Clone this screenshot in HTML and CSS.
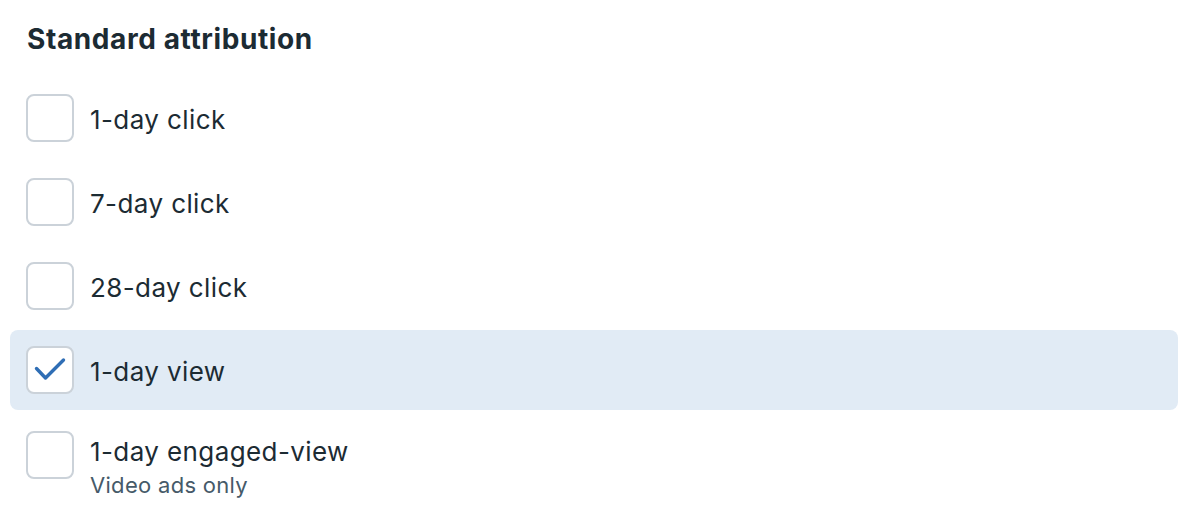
FILE: index.html
```html
<!DOCTYPE html>
<html>
<head>
<meta charset="utf-8">
<link rel="stylesheet" href="styles.css">
</head>
<body>
<div class="panel">
  <h2 class="title">Standard attribution</h2>
  <div class="list">
    <label class="row">
      <span class="box"></span>
      <span class="text"><span class="label">1-day click</span></span>
    </label>
    <label class="row">
      <span class="box"></span>
      <span class="text"><span class="label">7-day click</span></span>
    </label>
    <label class="row">
      <span class="box"></span>
      <span class="text"><span class="label">28-day click</span></span>
    </label>
    <label class="row selected">
      <span class="box">
        <svg class="check" width="48" height="48" viewBox="0 0 48 48"><path d="M10.5 22.5 L19.5 32 L37.5 14" fill="none" stroke="#2f6eb5" stroke-width="3.4" stroke-linecap="round" stroke-linejoin="round"/></svg>
      </span>
      <span class="text"><span class="label">1-day view</span></span>
    </label>
    <label class="row top">
      <span class="box"></span>
      <span class="text">
        <span class="label">1-day engaged-view</span>
        <span class="sub">Video ads only</span>
      </span>
    </label>
  </div>
</div>
</body>
</html>
```

FILE: styles.css
```css
html, body {
  margin: 0;
  padding: 0;
  background: #ffffff;
}
body {
  font-family: "Inter", "Roboto", "Liberation Sans", sans-serif;
  color: #1c2b33;
}
.panel {
  padding: 23px 10px 0 10px;
}
.title {
  margin: 0 0 23px 17px;
  font-size: 28px;
  line-height: 32px;
  font-weight: 700;
  letter-spacing: 0.6px;
  color: #1c2b33;
}
.list {
  display: flex;
  flex-direction: column;
  gap: 4px;
}
.row {
  display: flex;
  align-items: center;
  gap: 16px;
  padding: 16px;
  height: 48px;
  border-radius: 8px;
}
.row.top {
  align-items: flex-start;
  height: auto;
  padding-top: 17px;
}
.row.selected {
  background: #e1ebf5;
}
.box {
  width: 44px;
  height: 44px;
  border: 2px solid #cbd2d9;
  border-radius: 8px;
  background: #ffffff;
  flex: none;
  position: relative;
}
.check {
  position: absolute;
  left: -2px;
  top: -2px;
}
.text {
  display: flex;
  flex-direction: column;
  padding-top: 3px;
}
.label {
  font-size: 26px;
  line-height: 32px;
  letter-spacing: 0.4px;
}
.row.top .text {
  padding-top: 5px;
}
.sub {
  font-size: 22px;
  line-height: 30px;
  margin-top: 2px;
  letter-spacing: 0.3px;
  color: #465a69;
}
```
